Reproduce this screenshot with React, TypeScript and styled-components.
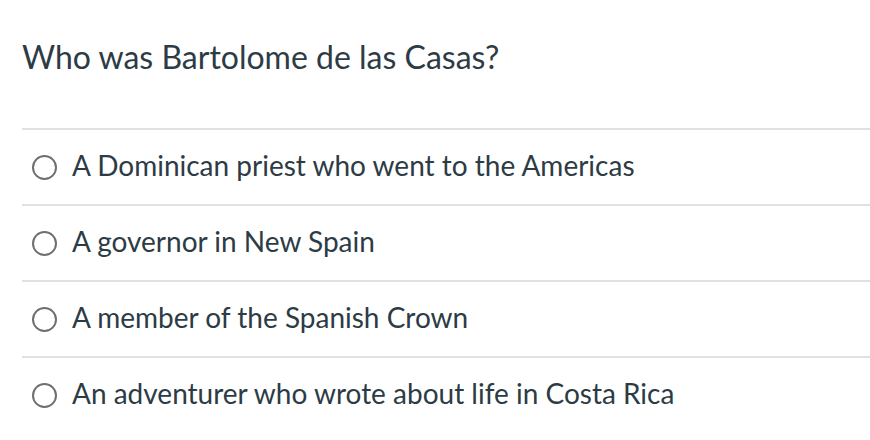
import React from "react";
import styled, { createGlobalStyle } from "styled-components";

const Global = createGlobalStyle`
  html, body { margin: 0; padding: 0; background: #fff; }
  body { font-family: Lato, "Noto Sans", sans-serif; color: #2d3b45; }
`;

const Page = styled.div`
  padding: 34px 0 0 22px;
`;

const Question = styled.h2`
  margin: 0;
  font-weight: 400;
  font-size: 32px;
  line-height: 46px;
  height: 46px;
  margin-bottom: 48px;
`;

const List = styled.div`
  display: flex;
  flex-direction: column;
`;

const Row = styled.label`
  display: flex;
  align-items: center;
  gap: 15px;
  height: 74px;
  border-top: 2px solid #dfe1e3;
  padding-left: 10px;
  font-size: 28px;
  cursor: pointer;
`;

const Label = styled.span`
  line-height: 34px;
  margin-top: -4px;
`;

const Radio = styled.span`
  box-sizing: border-box;
  width: 25px;
  height: 25px;
  border-radius: 50%;
  border: 2px solid #6f6f6f;
  background: #fff;
  flex: none;
`;

const answers = [
  "A Dominican priest who went to the Americas",
  "A governor in New Spain",
  "A member of the Spanish Crown",
  "An adventurer who wrote about life in Costa Rica",
];

export default function App() {
  return (
    <>
      <Global />
      <Page>
        <Question>Who was Bartolome de las Casas?</Question>
        <List>
          {answers.map((a) => (
            <Row key={a}>
              <Radio />
              <Label>{a}</Label>
            </Row>
          ))}
        </List>
      </Page>
    </>
  );
}
